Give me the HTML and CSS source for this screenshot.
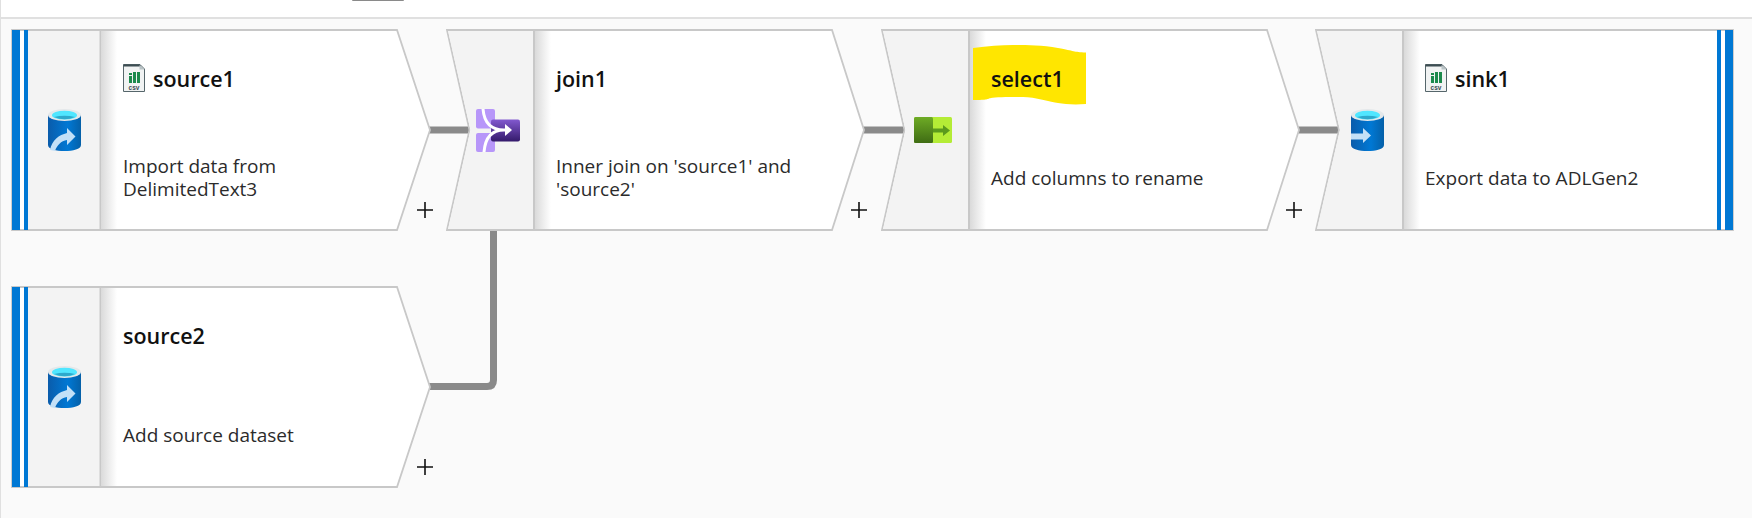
FILE: index.html
```html
<!DOCTYPE html>
<html lang="en">
<head>
  <meta charset="UTF-8" />
  <meta name="viewport" content="width=device-width, initial-scale=1.0"/>
  <title>Data flow</title>
  <link rel="stylesheet" href="styles.css">
</head>
<body>
  <!-- shared icons -->
  <svg class="svg-defs" width="0" height="0" aria-hidden="true">
    <defs>
      <linearGradient id="dbBlue" x1="0" y1="0" x2="1" y2="0">
        <stop offset="0" stop-color="#0a5cab"/>
        <stop offset="0.6" stop-color="#0078d4"/>
        <stop offset="1" stop-color="#0560a8"/>
      </linearGradient>
      <linearGradient id="joinDark" x1="0" y1="0" x2="0" y2="1">
        <stop offset="0" stop-color="#8259cf"/>
        <stop offset="1" stop-color="#341a6b"/>
      </linearGradient>
      <linearGradient id="selectDark" x1="0" y1="0" x2="0" y2="1">
        <stop offset="0" stop-color="#6eab25"/>
        <stop offset="1" stop-color="#3f6c14"/>
      </linearGradient>
      <symbol id="db" viewBox="0 0 33 42">
        <path d="M0 6V36C0 40 8 42 16.5 42S33 40 33 36V6Z" fill="url(#dbBlue)"/>
        <ellipse cx="16.5" cy="6" rx="16.5" ry="6" fill="#e4e8ea"/>
        <ellipse cx="16.5" cy="6.2" rx="12.5" ry="4.4" fill="#50e6ff"/>
        <path d="M6 8Q16.5 5.4 27 8Q16.5 12.4 6 8Z" fill="#2ea9cc"/>
      </symbol>
      <symbol id="csv" viewBox="0 0 22 28">
        <path d="M.5.5H17L21.5 5V27.5H.5Z" fill="#f1f3f3" stroke="#56666b"/>
        <path d="M.5.5H17L18 2.5H.5Z" fill="#3d4d52"/>
        <path d="M16.5 1V5.5H21.5Z" fill="#b9c3c6"/>
        <path d="M6 12H9V19H6ZM10 8H13V19H10ZM14 8H17V19H14ZM6 9H9V11H6Z" fill="#1c8a4c"/>
        <text x="11" y="25.5" class="csv-label">csv</text>
      </symbol>
      <symbol id="plus" viewBox="0 0 16 16">
        <path d="M8 0V16M0 8H16" stroke="#111" stroke-width="1.6" fill="none"/>
      </symbol>
    </defs>
  </svg>

  <header class="topbar"><span class="topbar-tab"></span></header>

  <main class="canvas">
    <svg class="links" width="1752" height="499" viewBox="0 0 1752 499">
      <path d="M428 111H472M862 111H906M1297 111H1342" />
      <path d="M428 367.5H487Q493.500 367.500 493.500 361V210" />
    </svg>

    <section class="node node-source node-source1">
      <svg class="node-shape" width="421" height="202" viewBox="0 0 421 202">
        <polygon class="outline" points="1,1 386,1 419,101 386,201 1,201"/>
        <rect class="panel" x="17" y="2" width="72" height="198"/>
        <line class="divider" x1="89.500" y1="1" x2="89.500" y2="201"/>
      </svg>
      <div class="stripes"><i class="bar-wide"></i><i class="bar-thin"></i></div>
      <div class="node-icon">
        <svg class="icon-db" viewBox="0 0 33 42">
          <use href="#db"/>
          <path class="arrow-light" d="M2 41C4 31 11 26 19 24V19L27.500 27.500 19 36V31C13 32 9 36 7 42Z"/>
        </svg>
      </div>
      <div class="node-body">
        <h3 class="node-title"><svg class="icon-csv"><use href="#csv"/></svg>source1</h3>
        <p class="node-desc">Import data from DelimitedText3</p>
      </div>
      <svg class="add"><use href="#plus"/></svg>
    </section>

    <section class="node node-join">
      <svg class="node-shape" width="420" height="202" viewBox="0 0 420 202">
        <polygon class="outline" points="1,1 386,1 418,101 386,201 1,201 23.500,101"/>
        <polygon class="panel" points="2,2 87,2 87,200 2,200 24.500,101"/>
        <line class="divider" x1="88" y1="1" x2="88" y2="201"/>
      </svg>
      <div class="node-icon">
        <svg class="icon-join" viewBox="0 0 44 43">
          <rect x="0" y="0" width="19" height="19.500" rx="2" fill="#b796f9"/>
          <rect x="0" y="24" width="19" height="19" rx="2" fill="#b796f9"/>
          <rect x="15" y="10.500" width="29" height="22" rx="2" fill="url(#joinDark)"/>
          <path class="join-lines" d="M7 0C8 12 14 21 28 21H32M8 43C9 31 14 21 28 21"/>
          <path d="M29 15L36 21 29 27Z" fill="#fff"/>
        </svg>
      </div>
      <div class="node-body">
        <h3 class="node-title">join1</h3>
        <p class="node-desc">Inner join on 'source1' and 'source2'</p>
      </div>
      <svg class="add"><use href="#plus"/></svg>
    </section>

    <section class="node node-select">
      <svg class="node-shape" width="420" height="202" viewBox="0 0 420 202">
        <polygon class="outline" points="1,1 386,1 418,101 386,201 1,201 23.500,101"/>
        <polygon class="panel" points="2,2 87,2 87,200 2,200 24.500,101"/>
        <line class="divider" x1="88" y1="1" x2="88" y2="201"/>
      </svg>
      <div class="node-icon">
        <svg class="icon-select" viewBox="0 0 38 26">
          <rect x="0" y="0" width="38" height="26" rx="1.500" fill="#b4ec36"/>
          <rect x="0" y="0" width="19" height="26" rx="1.500" fill="url(#selectDark)"/>
          <path d="M19 11.500H29V8L36 13.500 29 19V15.500H19Z" fill="#5b9a1d"/>
        </svg>
      </div>
      <div class="node-body">
        <svg class="scribble" width="114" height="60" viewBox="0 0 114 60">
          <path d="M0 3C15 1 28 0 40 0S68 0 85 3 100 7 113 7.500V59C100 60 92 59 85 58S62 52 50 52 22 52 18 53 15 55 0 55Z"/>
        </svg>
        <h3 class="node-title">select1</h3>
        <p class="node-desc">Add columns to rename</p>
      </div>
      <svg class="add"><use href="#plus"/></svg>
    </section>

    <section class="node node-sink">
      <svg class="node-shape" width="420" height="202" viewBox="0 0 420 202">
        <polygon class="outline" points="1,1 418,1 418,201 1,201 24,101"/>
        <polygon class="panel" points="2,2 87,2 87,200 2,200 25,101"/>
        <line class="divider" x1="88" y1="1" x2="88" y2="201"/>
      </svg>
      <div class="node-icon">
        <svg class="icon-db" viewBox="0 0 33 42">
          <use href="#db"/>
          <path class="arrow-light" d="M0 24.500H12V19L20 26.500 12 34V30.500H0Z"/>
        </svg>
      </div>
      <div class="node-body">
        <h3 class="node-title"><svg class="icon-csv"><use href="#csv"/></svg>sink1</h3>
        <p class="node-desc">Export data to ADLGen2</p>
      </div>
      <div class="stripes stripes-end"><i class="bar-thin"></i><i class="bar-wide"></i></div>
    </section>

    <section class="node node-source node-source2">
      <svg class="node-shape" width="421" height="202" viewBox="0 0 421 202">
        <polygon class="outline" points="1,1 386,1 419,101 386,201 1,201"/>
        <rect class="panel" x="17" y="2" width="72" height="198"/>
        <line class="divider" x1="89.500" y1="1" x2="89.500" y2="201"/>
      </svg>
      <div class="stripes"><i class="bar-wide"></i><i class="bar-thin"></i></div>
      <div class="node-icon">
        <svg class="icon-db" viewBox="0 0 33 42">
          <use href="#db"/>
          <path class="arrow-light" d="M2 41C4 31 11 26 19 24V19L27.500 27.500 19 36V31C13 32 9 36 7 42Z"/>
        </svg>
      </div>
      <div class="node-body">
        <h3 class="node-title">source2</h3>
        <p class="node-desc">Add source dataset</p>
      </div>
      <svg class="add"><use href="#plus"/></svg>
    </section>
  </main>
</body>
</html>
```

FILE: styles.css
```css
* {
  margin: 0;
  padding: 0;
  box-sizing: border-box;
}

html,
body {
  height: 100%;
  overflow: hidden;
}

body {
  display: flex;
  flex-direction: column;
  font-family: 'Open Sans', 'Noto Sans', sans-serif;
  color: #242424;
  background: #fff;
  border-left: 1px solid #e0e0e0;
}

.svg-defs {
  position: absolute;
}

.csv-label {
  font: 700 6.5px 'Liberation Sans', sans-serif;
  fill: #3d4d52;
  text-anchor: middle;
}

/* Top bar */
.topbar {
  height: 19px;
  flex: none;
  border-bottom: 2px solid #e0e0e0;
  background: #fff;
  padding-left: 351px;
}

.topbar-tab {
  display: block;
  width: 52px;
  height: 1px;
  background: #8a8a8a;
  border-radius: 0 0 3px 3px;
}

/* Canvas */
.canvas {
  position: relative;
  flex: 1;
  background: #fafafa;
}

.links {
  position: absolute;
  left: -1px;
  top: 0;
}

.links path {
  fill: none;
  stroke: #8a8a8a;
  stroke-width: 7;
}

/* Nodes sit on a free canvas */
.node {
  position: absolute;
  height: 202px;
  display: flex;
}

.node-source1 { left: 10px; top: 10px; width: 420px; }
.node-join { left: 445px; top: 10px; width: 419px; }
.node-select { left: 880px; top: 10px; width: 419px; }
.node-sink { left: 1314px; top: 10px; width: 419px; }
.node-source2 { left: 10px; top: 267px; width: 420px; }

.node-shape {
  position: absolute;
  left: 0;
  top: 0;
}

.outline {
  fill: #fff;
  stroke: #c8c8c8;
  stroke-width: 1.8;
}

.panel {
  fill: #f3f3f3;
}

.divider {
  stroke: #c8c8c8;
  stroke-width: 2;
}

.stripes {
  position: relative;
  flex: none;
  display: flex;
  gap: 4px;
  width: 17px;
  padding: 1px 0 1px 1px;
}

.stripes-end {
  padding: 1px 1px 1px 0;
}

.bar-wide {
  width: 8px;
  background: #0078d4;
}

.bar-thin {
  width: 4px;
  background: #0078d4;
}

.node-icon {
  position: relative;
  flex: none;
  width: 89px;
  padding-left: 14px;
  display: flex;
  align-items: center;
  justify-content: center;
}

.node-source .node-icon {
  width: 72px;
  padding-left: 0;
}

.node-sink .node-icon {
  padding-left: 15px;
}

.icon-db {
  width: 33px;
  height: 42px;
}

.icon-join {
  width: 44px;
  height: 43px;
}

.icon-select {
  width: 38px;
  height: 26px;
}

.arrow-light {
  fill: #c3e0f7;
}

.join-lines {
  fill: none;
  stroke: #fff;
  stroke-width: 3;
}

.node-body {
  position: relative;
  flex: 1;
  margin: 2px 0;
  padding: 33px 32px 0 21px;
  background: linear-gradient(to right, #dadada, #fff) no-repeat;
  background-size: 16px 100%;
}

.node-source .node-body {
  margin-left: 1px;
  padding-left: 22px;
}

.node-title {
  position: relative;
  height: 30px;
  display: flex;
  align-items: center;
  gap: 8px;
  font-size: 21.5px;
  font-weight: 600;
  line-height: 30px;
  color: #111;
}

.icon-csv {
  width: 22px;
  height: 28px;
  flex: none;
  margin-top: -3px;
}

.scribble {
  position: absolute;
  left: 3px;
  top: 14px;
}

.scribble path {
  fill: #ffe600;
}

.node-desc {
  min-height: 46px;
  margin-top: 61px;
  display: flex;
  align-items: center;
  font-size: 19px;
  line-height: 23px;
  color: #2b2b2b;
}

.add {
  position: absolute;
  right: -2px;
  bottom: 13px;
  width: 16px;
  height: 16px;
}
```
